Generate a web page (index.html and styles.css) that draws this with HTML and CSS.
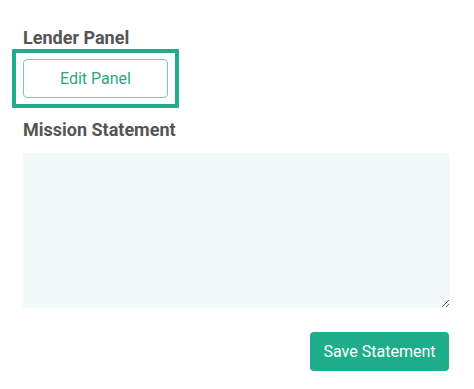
FILE: index.html
```html
<!DOCTYPE html>
<html lang="en">

<head>
    <meta charset="UTF-8">
    <meta name="viewport" content="width=device-width, initial-scale=1.0">
    <title>Lender Panel</title>
    <link rel="stylesheet" href="styles.css">
</head>

<body>
    <div class="page">
        <div class="field">
            <label class="label">Lender Panel</label>
            <div class="panel-row">
                <!-- 高亮框 -->
                <div class="highlight">
                    <button class="btn-outline">Edit Panel</button>
                </div>
            </div>
        </div>

        <div class="field">
            <label class="label" for="mission">Mission Statement</label>
            <textarea id="mission" class="mission"></textarea>
        </div>

        <div class="actions">
            <button class="btn-solid">Save Statement</button>
        </div>
    </div>
</body>

</html>
```

FILE: styles.css
```css
* {
    margin: 0;
    padding: 0;
    box-sizing: border-box;
}

body {
    font-family: Roboto, "Liberation Sans", sans-serif;
    background-color: #fff;
    color: #555;
}

.page {
    padding: 28px 24px 0 23px;
}

.label {
    display: block;
    font-size: 18px;
    font-weight: bold;
    line-height: 20px;
    color: #555;
}

.panel-row {
    padding: 1px 0 12px;
    margin-left: -11px;
}

.highlight {
    display: inline-block;
    padding: 6px 7px;
    border: 4px solid #1fae8c;
    border-radius: 1px;
}

.btn-outline {
    display: block;
    width: 145px;
    height: 39px;

    font-family: inherit;
    font-size: 16px;
    color: #2aa885;
    background-color: #fff;

    border: 1px solid #74cab4;
    border-radius: 4px;
}

.mission {
    display: block;
    width: 427px;
    height: 155px;
    margin-top: 13px;

    background-color: #f1faf8;
    border: none;
    border-radius: 2px;
    resize: vertical;
}

.actions {
    display: flex;
    justify-content: flex-end;
    padding: 24px 1px 0 0;
}

.btn-solid {
    width: 139px;
    height: 39px;

    font-family: inherit;
    font-size: 16px;
    color: #fff;
    background-color: #20ad8c;

    border: none;
    border-radius: 4px;
}
```
